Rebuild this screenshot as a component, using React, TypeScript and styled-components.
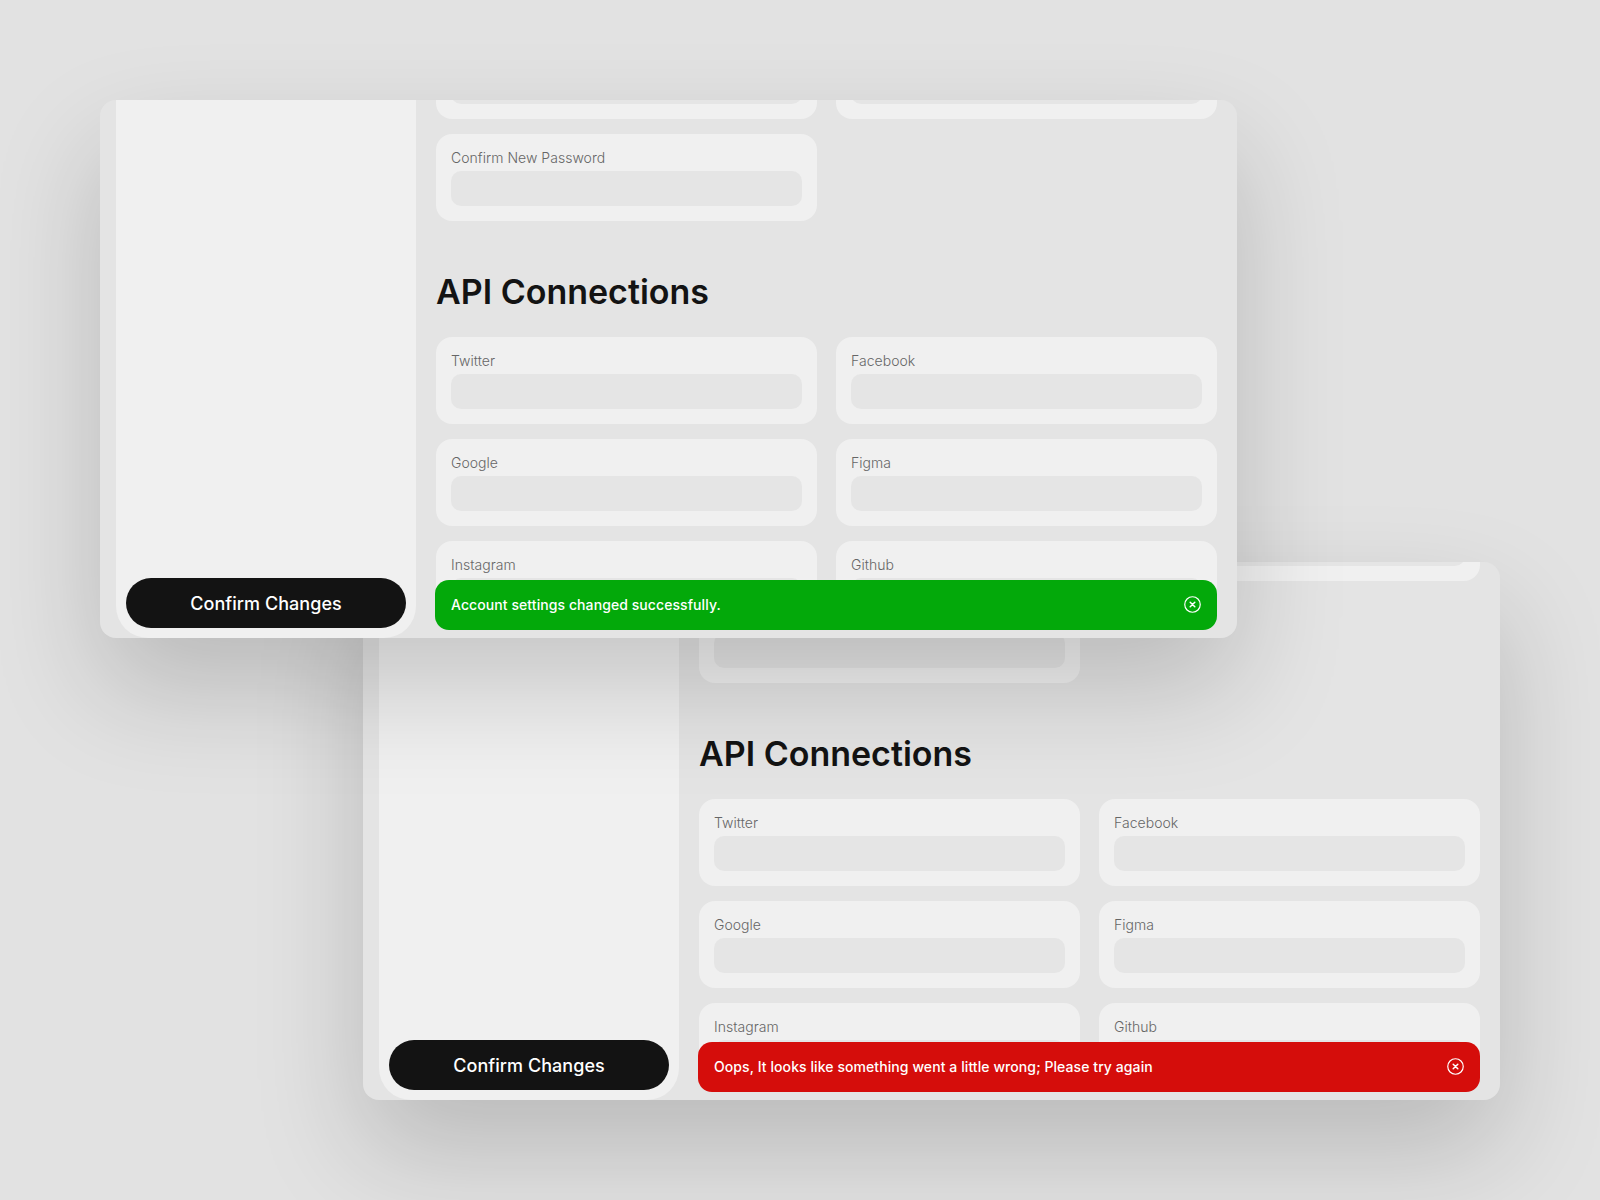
import { FunctionComponent } from 'react';
import styled, { createGlobalStyle } from 'styled-components';

const GlobalStyle = createGlobalStyle`
  html, body {
    margin: 0;
    padding: 0;
    background: #e2e2e2;
  }
  * {
    box-sizing: border-box;
  }
`;

const Canvas = styled.div`
  width: 1600px;
  height: 1200px;
  position: relative;
  overflow: hidden;
  background: #e2e2e2;
  font-family: 'Inter', 'Liberation Sans', sans-serif;
`;

const Window = styled.section<{ $left: number; $top: number }>`
  position: absolute;
  left: ${({ $left }) => $left}px;
  top: ${({ $top }) => $top}px;
  width: 1137px;
  height: 538px;
  display: flex;
  padding-left: 16px;
  border-radius: 16px;
  background: #e4e4e4;
  overflow: hidden;
  box-shadow: 0 50px 110px rgba(0, 0, 0, 0.18);
`;

const Sidebar = styled.aside`
  width: 300px;
  flex-shrink: 0;
  height: 100%;
  display: flex;
  flex-direction: column;
  justify-content: flex-end;
  padding: 0 10px 10px;
  background: #f0f0f0;
  border-radius: 0 0 32px 32px;
`;

const ConfirmButton = styled.button`
  width: 280px;
  height: 50px;
  border: none;
  border-radius: 25px;
  background: #131313;
  color: #ffffff;
  font-family: inherit;
  font-size: 18px;
  font-weight: 500;
  letter-spacing: 0.05px;
  cursor: pointer;
`;

const Main = styled.main`
  flex: 1;
  position: relative;
  padding: 0 20px;
`;

const Content = styled.div`
  margin-top: -68px;
`;

const FieldGrid = styled.div`
  display: grid;
  grid-template-columns: 381px 381px;
  column-gap: 19px;
  row-gap: 15px;
`;

const FieldCard = styled.label`
  height: 87px;
  display: flex;
  flex-direction: column;
  gap: 5px;
  padding: 15px;
  border-radius: 16px;
  background: #f0f0f0;
`;

const FieldLabel = styled.span`
  font-size: 14px;
  line-height: 17px;
  font-weight: 300;
  letter-spacing: 0.03px;
  color: #666666;
`;

const FieldInput = styled.div`
  height: 35px;
  border-radius: 10px;
  background: #e5e5e5;
`;

const SectionTitle = styled.h2`
  margin: 50px 0 24px;
  font-size: 34px;
  line-height: 42px;
  font-weight: 600;
  color: #131313;
`;

const Toast = styled.div<{ $tone: 'success' | 'error' }>`
  position: absolute;
  left: 19px;
  right: 20px;
  bottom: 8px;
  height: 50px;
  display: flex;
  align-items: center;
  justify-content: space-between;
  padding: 0 16px 1px;
  border-radius: 14px;
  background: ${({ $tone }) => ($tone === 'success' ? '#03a90a' : '#d50d0b')};
  color: #ffffff;
  font-size: 14px;
  font-weight: 500;
  letter-spacing: 0.08px;
`;

const CloseIcon: FunctionComponent = () => (
  <svg width="17" height="17" viewBox="0 0 17 17" fill="none" stroke="#fff">
    <circle cx="8.5" cy="8.5" r="7.75" strokeWidth="1.2" />
    <path d="M6.2 6.2l4.6 4.6M10.8 6.2l-4.6 4.6" strokeWidth="1.5" strokeLinecap="round" />
  </svg>
);

const ACCOUNT_FIELDS = ['Current Password', 'New Password', 'Confirm New Password'];
const API_FIELDS = ['Twitter', 'Facebook', 'Google', 'Figma', 'Instagram', 'Github'];

interface ISettingsWindow {
  left: number;
  top: number;
  tone: 'success' | 'error';
  message: string;
}

const Fields: FunctionComponent<{ items: string[] }> = ({ items }) => (
  <FieldGrid>
    {items.map((title) => (
      <FieldCard key={title}>
        <FieldLabel>{title}</FieldLabel>
        <FieldInput />
      </FieldCard>
    ))}
  </FieldGrid>
);

const SettingsWindow: FunctionComponent<ISettingsWindow> = ({ left, top, tone, message }) => (
  <Window $left={left} $top={top}>
    <Sidebar>
      <ConfirmButton>Confirm Changes</ConfirmButton>
    </Sidebar>
    <Main>
      <Content>
        <Fields items={ACCOUNT_FIELDS} />
        <SectionTitle>API Connections</SectionTitle>
        <Fields items={API_FIELDS} />
      </Content>
      <Toast $tone={tone}>
        <span>{message}</span>
        <CloseIcon />
      </Toast>
    </Main>
  </Window>
);

const App: FunctionComponent = () => (
  <Canvas>
    <GlobalStyle />
    <SettingsWindow
      left={363}
      top={562}
      tone="error"
      message="Oops, It looks like something went a little wrong; Please try again"
    />
    <SettingsWindow
      left={100}
      top={100}
      tone="success"
      message="Account settings changed successfully."
    />
  </Canvas>
);

export default App;
